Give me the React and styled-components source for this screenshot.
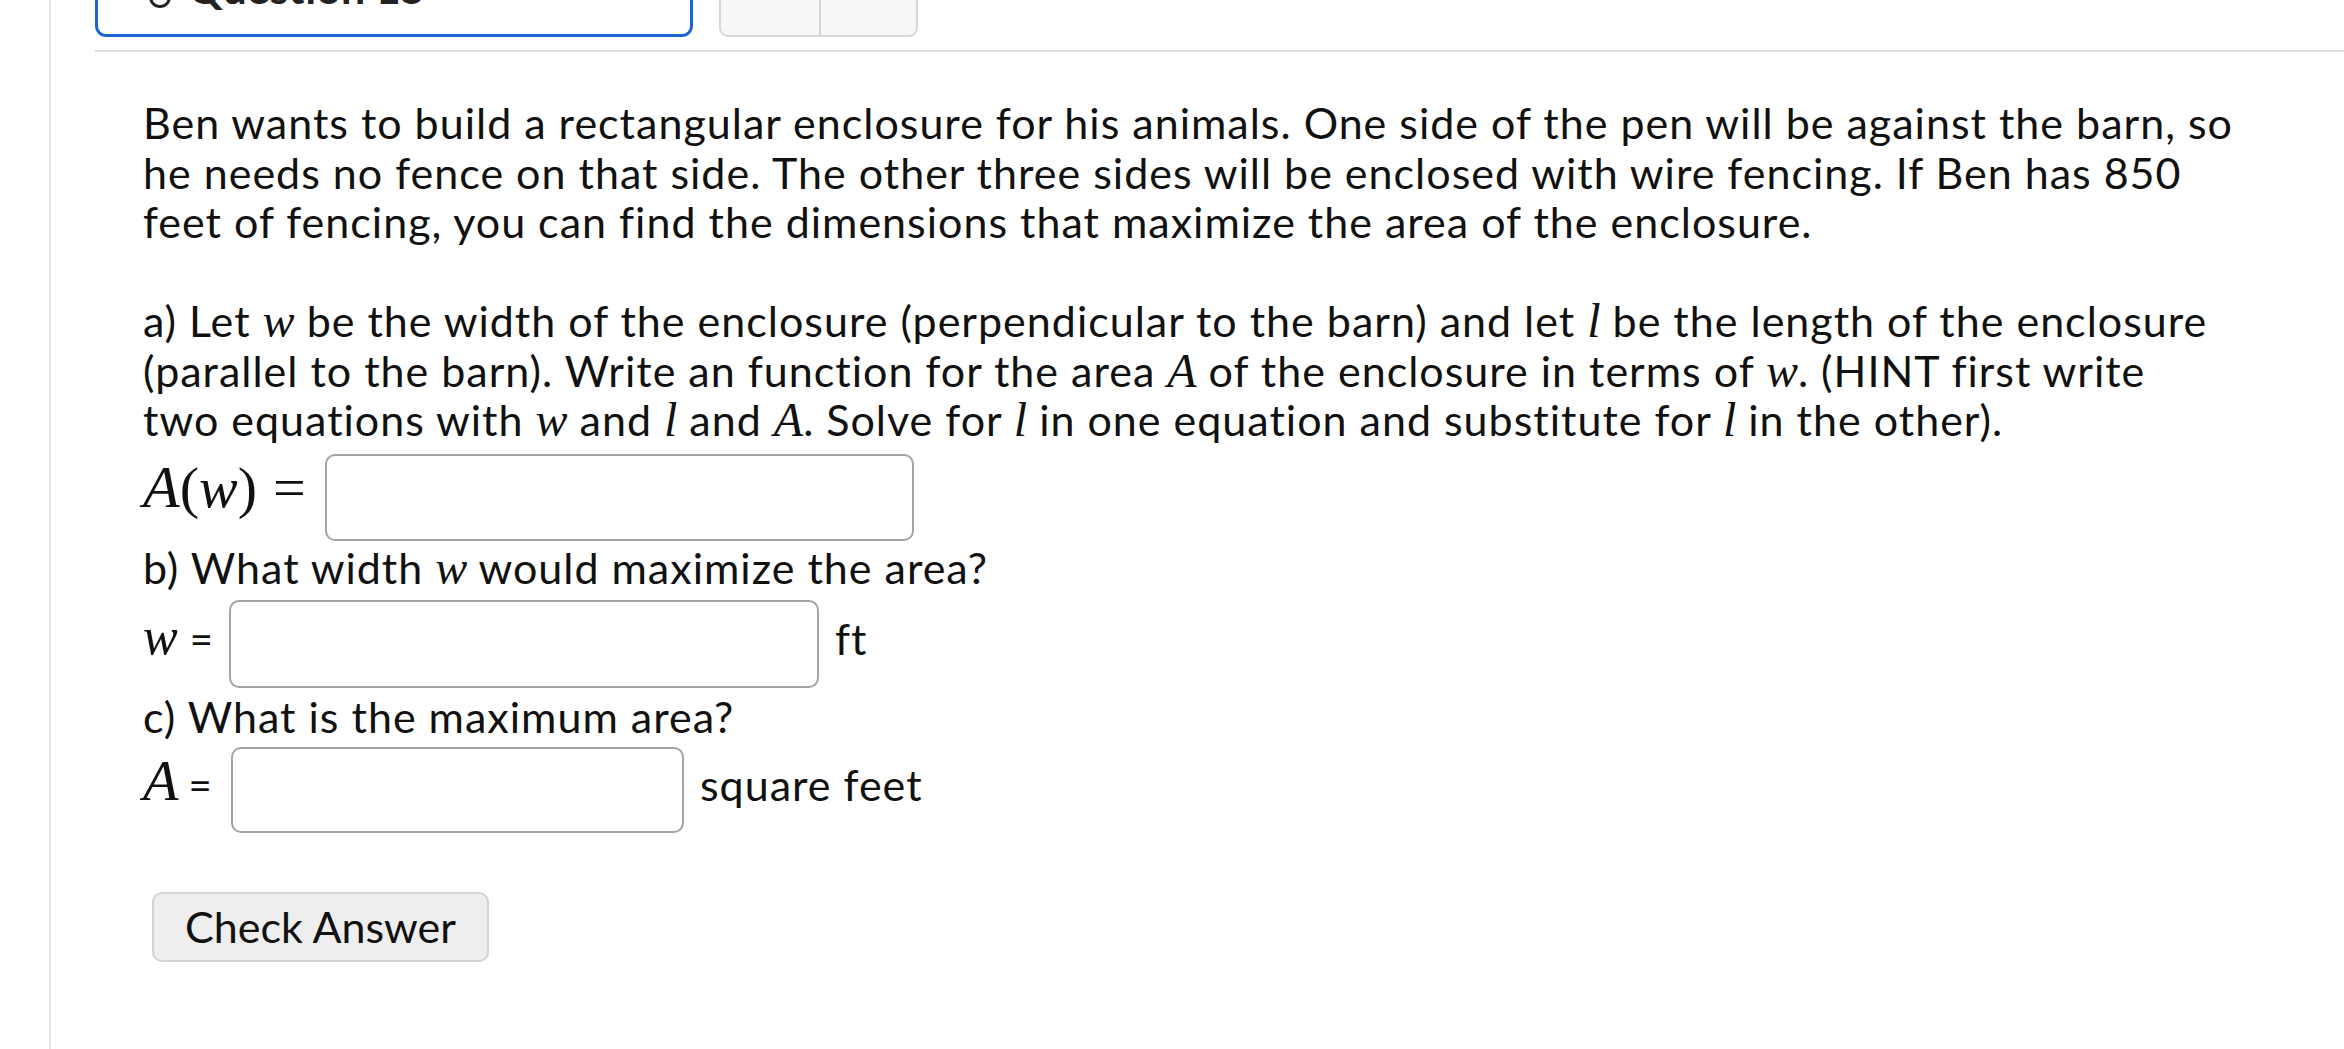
import React from 'react';
import styled, { createGlobalStyle } from 'styled-components';

const GlobalStyle = createGlobalStyle`
  html, body { margin: 0; padding: 0; background: #ffffff; }
  body {
    font-family: Lato, "Open Sans", "Liberation Sans", Arial, sans-serif;
    color: #111111;
    overflow: hidden;
  }
`;

const Page = styled.div`
  display: flex;
  width: 2344px;
  height: 1049px;
  overflow: hidden;
`;

const Gutter = styled.div`
  flex: none;
  width: 49px;
  border-right: 2px solid #e4e4e4;
`;

const Main = styled.main`
  flex: 1;
  min-width: 0;
  padding-left: 44px;
`;

const Header = styled.div`
  display: flex;
  align-items: flex-end;
  gap: 26px;
  height: 37px;
`;

const QuestionSelect = styled.div`
  box-sizing: border-box;
  flex: none;
  width: 598px;
  height: 90px;
  border: 3px solid #1b66d2;
  border-radius: 11px;
  display: flex;
  align-items: flex-end;
  gap: 16px;
  padding: 0 0 25px 50px;
  font-size: 43px;
  line-height: 43px;
  font-weight: 700;
  color: #222;
`;

const NavGroup = styled.div`
  box-sizing: border-box;
  flex: none;
  width: 199px;
  height: 80px;
  display: grid;
  grid-template-columns: 1fr 1fr;
  background: #f7f7f7;
  border: 2px solid #d8d8d8;
  border-radius: 9px;
  overflow: hidden;
`;

const NavHalf = styled.div`
  & + & {
    border-left: 2px solid #d4d4d4;
  }
`;

const Divider = styled.div`
  margin-top: 13px;
  height: 2px;
  background: #dcdcdc;
`;

const Content = styled.div`
  padding: 46px 0 0 48px;
`;

const Para = styled.p`
  margin: ${p => (p.$gap ? '49.5px' : '0')} 0 0 0;
  font-size: 43px;
  line-height: 49.5px;
  letter-spacing: 1px;
  white-space: nowrap;
`;

const M = styled.span`
  font-family: "Liberation Serif", "Times New Roman", serif;
  font-style: ${p => (p.$up ? 'normal' : 'italic')};
  font-size: ${p => p.$size || 48}px;
  letter-spacing: 0;
  line-height: 0;
`;

const AnswerRow = styled.div`
  display: flex;
  align-items: center;
  padding-top: ${p => p.$top}px;
  padding-bottom: ${p => p.$bottom}px;
`;

const Label = styled.div`
  flex: none;
  box-sizing: border-box;
  width: ${p => p.$width}px;
  font-size: 43px;
  line-height: 49.5px;
  padding-bottom: ${p => p.$lift || 0}px;
  white-space: nowrap;
`;

const Eq = styled.span`
  font-size: 40px;
  margin-left: ${p => p.$gap}px;
`;

const AnswerInput = styled.input`
  box-sizing: border-box;
  flex: none;
  width: ${p => p.$width}px;
  height: ${p => p.$height}px;
  margin: 0;
  border: 2px solid #a3a3a3;
  border-radius: 10px;
  background: #ffffff;
  font-size: 40px;
  outline: none;
`;

const Unit = styled.span`
  margin-left: 16px;
  font-size: 43px;
  line-height: 49.5px;
  letter-spacing: 1px;
  padding-bottom: ${p => p.$lift || 0}px;
`;

const CheckButton = styled.button`
  box-sizing: border-box;
  display: block;
  width: 337px;
  height: 70px;
  margin: 59px 0 0 9px;
  padding: 0;
  font-family: Lato, "Open Sans", Arial, sans-serif;
  font-size: 43px;
  color: #111;
  background: #eeeeee;
  border: 2px solid #d3d3d3;
  border-radius: 10px;
`;

const StatusDot = () => (
  <svg width="24" height="24" viewBox="0 0 24 24" aria-hidden="true">
    <circle cx="12" cy="12" r="9.5" fill="none" stroke="#222" strokeWidth="3" />
  </svg>
);

export default function App() {
  return (
    <>
      <GlobalStyle />
      <Page>
        <Gutter />
        <Main>
          <Header>
            <QuestionSelect>
              <StatusDot />
              <span>Question 15</span>
            </QuestionSelect>
            <NavGroup>
              <NavHalf />
              <NavHalf />
            </NavGroup>
          </Header>
          <Divider />
          <Content>
            <Para>
              Ben wants to build a rectangular enclosure for his animals. One side of the pen will be against the barn, so
              <br />
              he needs no fence on that side. The other three sides will be enclosed with wire fencing. If Ben has 850
              <br />
              feet of fencing, you can find the dimensions that maximize the area of the enclosure.
            </Para>
            <Para $gap>
              a) Let <M>w</M> be the width of the enclosure (perpendicular to the barn) and let <M>l</M> be the length of the enclosure
              <br />
              (parallel to the barn). Write an function for the area <M>A</M> of the enclosure in terms of <M>w</M>. (HINT first write
              <br />
              two equations with <M>w</M> and <M>l</M> and <M>A</M>. Solve for <M>l</M> in one equation and substitute for <M>l</M> in the other).
            </Para>
            <AnswerRow $top={9} $bottom={2}>
              <Label $width={182} $lift={12}>
                <M $size={60}>A</M>
                <M $size={58} $up>(</M>
                <M $size={58}>w</M>
                <M $size={58} $up>)</M>
                <M $size={58} $up style={{ marginLeft: 16 }}>=</M>
              </Label>
              <AnswerInput $width={589} $height={87} aria-label="A(w)" />
            </AnswerRow>
            <Para>
              b) What width <M>w</M> would maximize the area?
            </Para>
            <AnswerRow $top={8} $bottom={4}>
              <Label $width={86} $lift={10}>
                <M $size={52}>w</M>
                <Eq $gap={12}>=</Eq>
              </Label>
              <AnswerInput $width={590} $height={88} aria-label="w" />
              <Unit $lift={10}>ft</Unit>
            </AnswerRow>
            <Para>
              c) What is the maximum area?
            </Para>
            <AnswerRow $top={5} $bottom={0}>
              <Label $width={88} $lift={10}>
                <M $size={58}>A</M>
                <Eq $gap={10}>=</Eq>
              </Label>
              <AnswerInput $width={453} $height={86} aria-label="A" />
              <Unit $lift={10}>square feet</Unit>
            </AnswerRow>
            <CheckButton type="button">Check Answer</CheckButton>
          </Content>
        </Main>
      </Page>
    </>
  );
}
